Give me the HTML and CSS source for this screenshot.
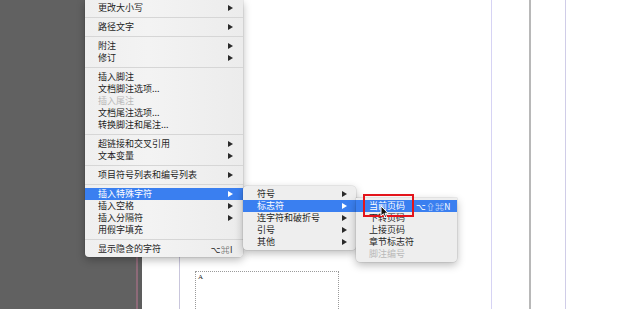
FILE: index.html
```html
<!DOCTYPE html>
<html>
<head>
<meta charset="utf-8">
<link rel="stylesheet" href="styles.css">
</head>
<body>
<div class="screen">
  <div class="paste">
    <div class="paste-a"></div>
    <div class="bleed"></div>
    <div class="paste-b"></div>
  </div>
  <div class="page">
    <div class="margin-col"></div>
    <div class="body-col">
      <div class="frame"><span class="frame-a">A</span></div>
    </div>
    <div class="col col-a"></div>
    <div class="col col-b"></div>
    <div class="col col-c"></div>
  </div>

  <div class="menu menu-main">
    <div class="item sub">更改大小写</div>
    <div class="sep"></div>
    <div class="item sub">路径文字</div>
    <div class="sep"></div>
    <div class="item sub">附注</div>
    <div class="item sub">修订</div>
    <div class="sep"></div>
    <div class="item">插入脚注</div>
    <div class="item">文档脚注选项...</div>
    <div class="item off">插入尾注</div>
    <div class="item">文档尾注选项...</div>
    <div class="item">转换脚注和尾注...</div>
    <div class="sep"></div>
    <div class="item sub">超链接和交叉引用</div>
    <div class="item sub">文本变量</div>
    <div class="sep"></div>
    <div class="item sub">项目符号列表和编号列表</div>
    <div class="sep"></div>
    <div class="item sub on">插入特殊字符</div>
    <div class="item sub">插入空格</div>
    <div class="item sub">插入分隔符</div>
    <div class="item">用假字填充</div>
    <div class="sep"></div>
    <div class="item"><span>显示隐含的字符</span><span class="key">⌥⌘I</span></div>
  </div>

  <div class="menu menu-sub1">
    <div class="item sub">符号</div>
    <div class="item sub on">标志符</div>
    <div class="item sub">连字符和破折号</div>
    <div class="item sub">引号</div>
    <div class="item sub">其他</div>
  </div>

  <div class="menu menu-sub2">
    <div class="item on"><span>当前页码</span><span class="key">⌥⇧⌘N</span></div>
    <div class="item">下转页码</div>
    <div class="item">上接页码</div>
    <div class="item">章节标志符</div>
    <div class="item off">脚注编号</div>
  </div>

  <div class="callout"></div>
  <svg class="cursor" width="9" height="14" viewBox="0 0 9 14">
    <path d="M1 1 L1 11 L3.4 8.8 L5 12.5 L6.6 11.8 L5 8.2 L8 8.2 Z" fill="#111" stroke="#fff" stroke-width="1" stroke-linejoin="round"/>
  </svg>
</div>
</body>
</html>
```

FILE: styles.css
```css
* { box-sizing: border-box; }
html, body { margin: 0; padding: 0; }
body {
  width: 620px;
  height: 309px;
  overflow: hidden;
  font-family: "Noto Sans CJK SC", "DejaVu Sans", sans-serif;
}
.screen {
  position: relative;
  width: 620px;
  height: 309px;
  display: flex;
  overflow: hidden;
  background: #fff;
}
.paste {
  display: flex;
  width: 142px;
  height: 100%;
  flex: none;
}
.paste-a { width: 136px; background: #616161; }
.bleed { width: 2px; background: #8d6a78; }
.paste-b { width: 4px; background: #5d5d5d; }

.page {
  flex: 1;
  display: flex;
  height: 100%;
  background: #fff;
}
.margin-col {
  width: 38px;
  border-right: 1px solid #c9c6dc;
}
.body-col {
  width: 311px;
  padding-top: 271px;
  padding-left: 15px;
}
.frame {
  width: 144px;
  height: 60px;
  border-top: 1px dotted #9a9a9a;
  border-left: 1px dotted #9a9a9a;
  border-right: 1px dotted #9a9a9a;
  padding: 2px 0 0 2px;
}
.frame-a {
  display: block;
  font-family: "Liberation Serif", serif;
  font-size: 7px;
  line-height: 7px;
  color: #222;
}
.col { height: 100%; }
.col-a { width: 38px; border-left: 1px solid #d6d3f4; }
.col-b { width: 36px; border-left: 2px solid #b8b8b8; }
.col-c { width: 20px; border-left: 1px solid #d0cde8; }

.menu {
  position: absolute;
  background: #eeeeee;
  border-radius: 0 0 4px 4px;
  box-shadow: 0 3px 9px rgba(0,0,0,0.28), 0 0 0 0.5px rgba(0,0,0,0.12);
  padding: 2px 0 2px;
  z-index: 2;
}
.menu-main {
  left: 85px;
  top: 0;
  width: 158px;
  background: linear-gradient(90deg, #efefef, #f3f3f3 40%, #ececec);
}
.menu-sub1 {
  left: 243px;
  top: 186px;
  width: 113px;
  border-radius: 4px;
}
.menu-sub2 {
  left: 356px;
  top: 198px;
  width: 101px;
  border-radius: 0 0 4px 4px;
  z-index: 3;
}
.item {
  height: 12px;
  line-height: 12px;
  font-size: 9px;
  color: #1e1e1e;
  padding: 0 10px 0 13px;
  display: flex;
  justify-content: space-between;
  align-items: center;
  white-space: nowrap;
}
.menu-sub1 .item { padding-left: 14px; padding-right: 9px; }
.menu-sub2 .item { padding-right: 6px; }
.item.off { color: #b9b9b9; }
.item.on { background: #3a7ff0; color: #fff; }
.item.sub::after {
  content: "";
  width: 0;
  height: 0;
  border-left: 5px solid #2a2a2a;
  border-top: 3px solid transparent;
  border-bottom: 3px solid transparent;
}
.item.sub.on::after { border-left-color: #fff; }
.key {
  font-size: 8.5px;
  letter-spacing: 0.5px;
}
.sep {
  height: 7px;
  display: flex;
  align-items: center;
}
.sep::before {
  content: "";
  flex: 1;
  height: 1px;
  background: #d6d6d6;
}
.callout {
  position: absolute;
  left: 363px;
  top: 194px;
  width: 51px;
  height: 23px;
  border: 2.5px solid #e3141b;
  z-index: 4;
}
.cursor {
  position: absolute;
  left: 380px;
  top: 205px;
  z-index: 5;
}
```
